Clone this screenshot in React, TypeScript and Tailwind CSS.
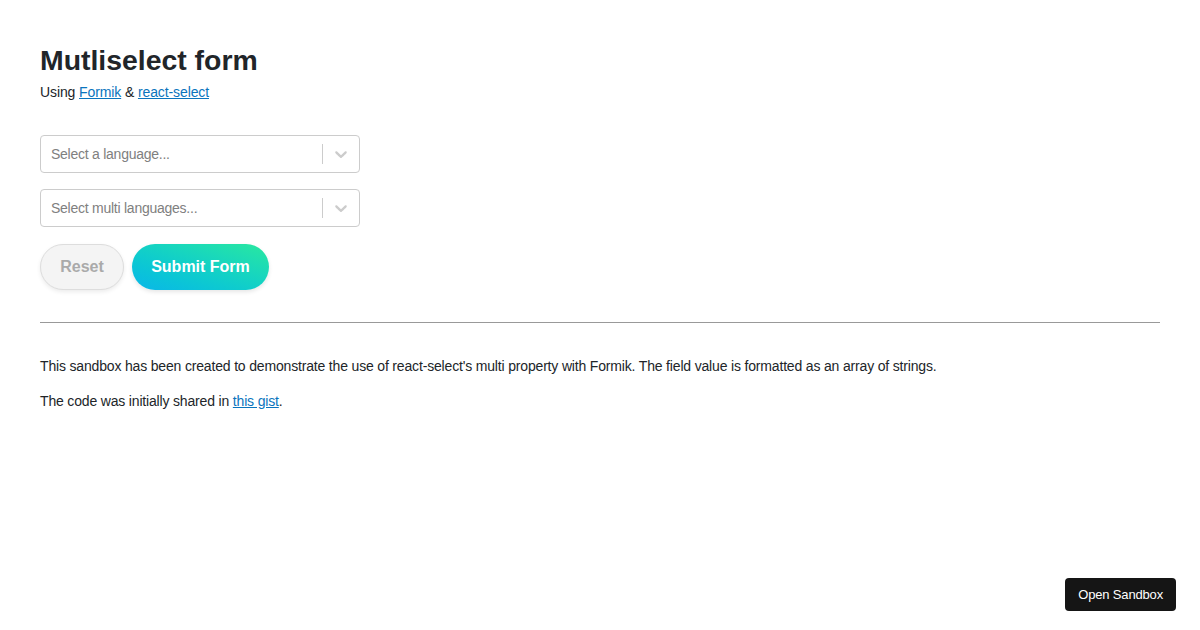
function Chevron() {
  return (
    <svg width="20" height="20" viewBox="0 0 20 20" fill="#cccccc">
      <path d="M4.516 7.548c0.436-0.446 1.043-0.481 1.576 0l3.908 3.747 3.908-3.747c0.533-0.481 1.141-0.446 1.574 0 0.436 0.445 0.408 1.197 0 1.615-0.406 0.418-4.695 4.502-4.695 4.502-0.217 0.223-0.502 0.335-0.787 0.335s-0.57-0.112-0.789-0.335c0 0-4.287-4.084-4.695-4.502s-0.436-1.17 0-1.615z" />
    </svg>
  );
}

function SelectBox({ placeholder }: { placeholder: string }) {
  return (
    <div className="flex h-[38px] w-[320px] items-center rounded-[4px] border border-[#cccccc] bg-white">
      <div className="flex-1 px-[10px] text-[14px] tracking-[-0.25px] text-[#808080]">{placeholder}</div>
      <span className="h-[20px] w-px bg-[#cccccc]" />
      <div className="flex w-[36px] items-center justify-center">
        <Chevron />
      </div>
    </div>
  );
}

export default function App() {
  return (
    <div className="relative h-[630px] w-full bg-white font-['Liberation_Sans',Arial,sans-serif] text-[#212529]">
      <div className="px-10 pt-[43px]">
        <h1 className="text-[28.4px] font-bold leading-[34px]">Mutliselect form</h1>
        <p className="mt-[5px] text-[14px] leading-[20px] tracking-[-0.11px]">
          Using{" "}
          <a href="#" className="text-[#0a74bd] underline">
            Formik
          </a>{" "}
          &amp;{" "}
          <a href="#" className="text-[#0a74bd] underline">
            react-select
          </a>
        </p>

        <div className="mt-[33px] flex flex-col gap-4">
          <SelectBox placeholder="Select a language..." />
          <SelectBox placeholder="Select multi languages..." />
        </div>

        <div className="mt-[17px] flex gap-2">
          <button className="h-[46px] w-[84px] rounded-full border border-[#dddddd] bg-[#f4f4f4] text-[16px] font-bold text-[#aaaaaa] shadow-[0_2px_4px_rgba(0,0,0,0.08)]">
            Reset
          </button>
          <button className="h-[46px] w-[137px] rounded-full bg-gradient-to-tr from-[#0db6e8] to-[#2ae89e] text-[16px] font-bold text-white shadow-[0_2px_4px_rgba(0,0,0,0.1)]">
            Submit Form
          </button>
        </div>

        <hr className="mt-[32px] border-t border-[#999999]" />

        <p className="mt-[33px] text-[14px] leading-[20px] tracking-[-0.17px]">
          This sandbox has been created to demonstrate the use of react-select's multi property with Formik. The field value is formatted as an array of strings.
        </p>
        <p className="mt-[15px] text-[14px] leading-[20px] tracking-[-0.17px]">
          The code was initially shared in{" "}
          <a href="#" className="text-[#0a74bd] underline">
            this gist
          </a>
          .
        </p>
      </div>

      <button className="absolute bottom-[19px] right-[24px] h-[33px] rounded-[4px] bg-[#151515] px-[13px] text-[13px] tracking-[-0.17px] text-white">
        Open Sandbox
      </button>
    </div>
  );
}
